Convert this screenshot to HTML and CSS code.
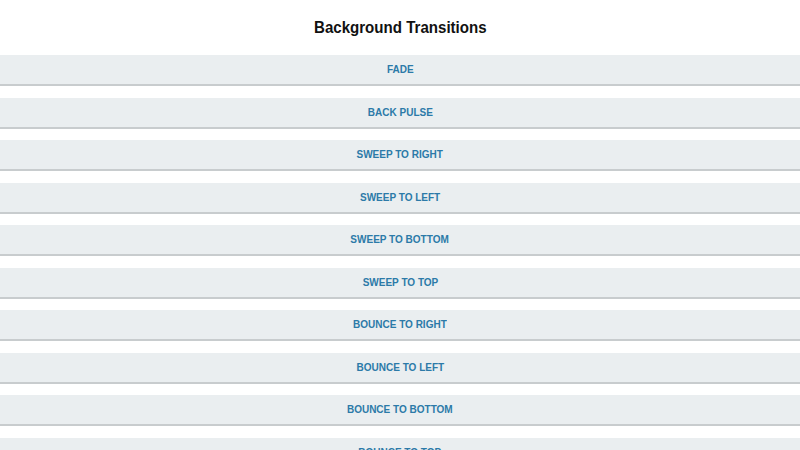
FILE: index.html
```html
<!DOCTYPE html>
<html>
<head>
<meta charset="utf-8">
<link rel="stylesheet" href="styles.css">
</head>
<body>
<h1 class="title"><span class="title-text">Background Transitions</span></h1>
<div class="list">
  <a class="btn"><span class="label">FADE</span></a>
  <a class="btn"><span class="label">BACK PULSE</span></a>
  <a class="btn"><span class="label">SWEEP TO RIGHT</span></a>
  <a class="btn"><span class="label">SWEEP TO LEFT</span></a>
  <a class="btn"><span class="label">SWEEP TO BOTTOM</span></a>
  <a class="btn"><span class="label">SWEEP TO TOP</span></a>
  <a class="btn"><span class="label">BOUNCE TO RIGHT</span></a>
  <a class="btn"><span class="label">BOUNCE TO LEFT</span></a>
  <a class="btn"><span class="label">BOUNCE TO BOTTOM</span></a>
  <a class="btn"><span class="label">BOUNCE TO TOP</span></a>
</div>
</body>
</html>
```
FILE: styles.css
```css
html, body {
  margin: 0;
  padding: 0;
  background: #ffffff;
  font-family: "Liberation Sans", Arial, sans-serif;
  overflow: hidden;
}
.title {
  margin: 0;
  height: 55px;
  line-height: 55px;
  font-size: 17px;
  font-weight: bold;
  text-align: center;
  color: #111;
}
.title-text {
  display: inline-block;
  transform: scaleX(0.887);
}
.list {
  display: flex;
  flex-direction: column;
  gap: 11.5px;
}
.btn {
  display: block;
  height: 29px;
  line-height: 29px;
  background: #eaeef0;
  border-bottom: 2px solid #c8ccce;
  text-align: center;
  color: #2c7aa8;
  font-size: 11.5px;
  font-weight: bold;
}
.label {
  display: inline-block;
  transform: scaleX(0.87);
}
```
